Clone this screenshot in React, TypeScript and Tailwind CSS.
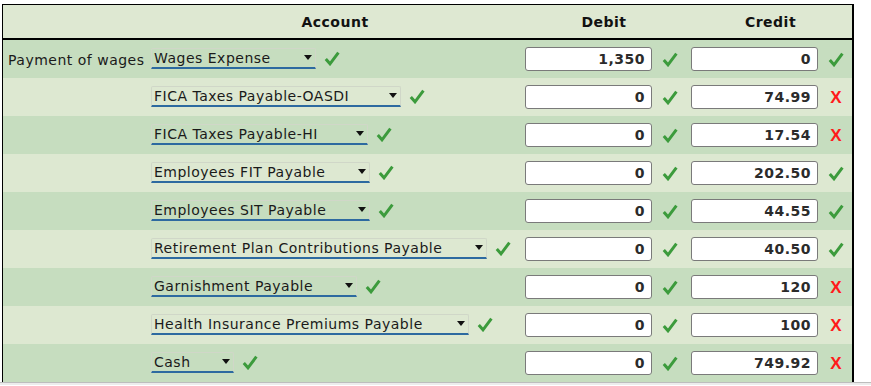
import React from "react";

type Line = {
  label?: string;
  account: string;
  selectWidth: number;
  debit: string;
  credit: string;
  creditOk: boolean;
};

const lines: Line[] = [
  { label: "Payment of wages", account: "Wages Expense", selectWidth: 165, debit: "1,350", credit: "0", creditOk: true },
  { account: "FICA Taxes Payable-OASDI", selectWidth: 250, debit: "0", credit: "74.99", creditOk: false },
  { account: "FICA Taxes Payable-HI", selectWidth: 217, debit: "0", credit: "17.54", creditOk: false },
  { account: "Employees FIT Payable", selectWidth: 219, debit: "0", credit: "202.50", creditOk: true },
  { account: "Employees SIT Payable", selectWidth: 219, debit: "0", credit: "44.55", creditOk: true },
  { account: "Retirement Plan Contributions Payable", selectWidth: 336, debit: "0", credit: "40.50", creditOk: true },
  { account: "Garnishment Payable", selectWidth: 206, debit: "0", credit: "120", creditOk: false },
  { account: "Health Insurance Premiums Payable", selectWidth: 318, debit: "0", credit: "100", creditOk: false },
  { account: "Cash", selectWidth: 83, debit: "0", credit: "749.92", creditOk: false },
];

const font = { fontFamily: '"DejaVu Sans", Verdana, sans-serif' };

const Check = () => (
  <svg width="16" height="15" viewBox="0 0 16 15" className="shrink-0">
    <path d="M1.8 8 L6 12.8 L14.4 1.6" fill="none" stroke="#3c9b3c" strokeWidth="3" strokeLinejoin="miter" />
  </svg>
);

const Cross = () => (
  <span className="w-[16px] shrink-0 text-center text-[17px] font-bold leading-none text-[#ff1a1a]" style={{ fontFamily: '"Liberation Sans", Arial, sans-serif' }}>
    X
  </span>
);

const Mark = ({ ok }: { ok: boolean }) => (ok ? <Check /> : <Cross />);

const AccountSelect = ({ value, width }: { value: string; width: number }) => (
  <div
    className="flex h-[21px] shrink-0 items-center justify-between rounded-t-[2px] border border-b-2 border-[#d0d7c8] border-b-[#2d6aa0] pl-[2px] pr-[3px] text-[14px] leading-none tracking-[0.5px] whitespace-nowrap text-[#1a1a1a]"
    style={{ width }}
  >
    <span>{value}</span>
    <svg width="8" height="5" viewBox="0 0 8 5">
      <path d="M0 0 H8 L4 5 Z" fill="#111" />
    </svg>
  </div>
);

const Amount = ({ value }: { value: string }) => (
  <input
    readOnly
    value={value}
    className="h-[24px] w-[127px] rounded-[3px] border border-[#7a7a7a] bg-white pr-[6px] text-right text-[14px] font-bold tracking-[0.5px] text-[#2b2b2b] outline-none"
    style={font}
  />
);

export default function App() {
  return (
    <div className="min-h-[386px] bg-white pt-[4px]" style={font}>
      <div className="ml-[2px] w-[852px] border-t border-l border-r-2 border-black">
        <div className="grid h-[35px] grid-cols-[147px_370px_168px_1fr] items-center border-b-2 border-black bg-[#dee8d2] pt-[1px] text-[14px] font-bold tracking-[0.5px] text-[#111]">
          <div />
          <div className="text-center">Account</div>
          <div className="text-center">Debit</div>
          <div className="pl-[1px] text-center">Credit</div>
        </div>
        {lines.map((l, i) => (
          <div
            key={l.account}
            className={`grid h-[38px] grid-cols-[147px_370px_168px_1fr] items-center ${i % 2 === 0 ? "bg-[#c6ddbf]" : "bg-[#dde8d1]"}`}
          >
            <div className="pl-[5px] pt-[3px] text-[14px] tracking-[0.5px] whitespace-nowrap text-[#1a1a1a]">{l.label}</div>
            <div className="flex items-center gap-[8px] pl-[1px] pb-[2px]">
              <AccountSelect value={l.account} width={l.selectWidth} />
              <Check />
            </div>
            <div className="flex items-center gap-[10px] pl-[5px]">
              <Amount value={l.debit} />
              <Check />
            </div>
            <div className="flex items-center gap-[10px] pl-[3px]">
              <Amount value={l.credit} />
              <Mark ok={l.creditOk} />
            </div>
          </div>
        ))}
      </div>
      <div className="h-[3px] border-t border-[#bdbdbd] bg-[#ececec]" />
    </div>
  );
}
